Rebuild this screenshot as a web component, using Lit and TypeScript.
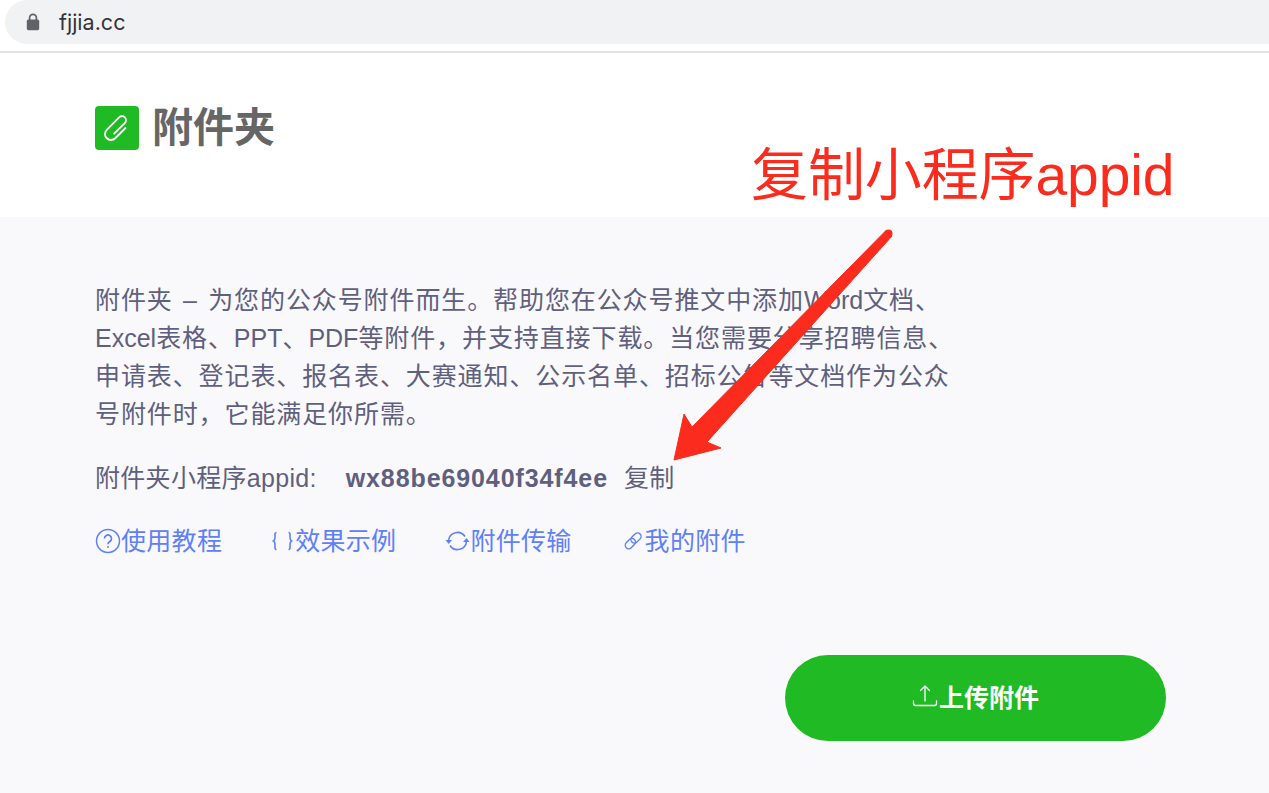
import { LitElement, html, css } from "lit";
import { customElement } from "lit/decorators.js";

@customElement("app-root")
export class AppRoot extends LitElement {
  static styles = css`
    :host { display: block; position: relative; width: 1269px; height: 793px; overflow: hidden; background: #fff;
      font-family: "Liberation Sans", "Noto Sans CJK SC", sans-serif; }
    .page { display: flex; flex-direction: column; height: 793px; }
    .chrome { flex: none; border-bottom: 2px solid #e2e2e4; box-sizing: border-box; height: 53px; padding-left: 5px; }
    .pill { height: 44px; margin-right: -40px; background: #f1f2f4; border-radius: 22px 0 0 22px; display: flex; align-items: center; padding-left: 21px; gap: 19px; color: #33353a; font-family: Inter, sans-serif; font-size: 21.5px; }
    .pill svg { display: block; }
    .head { height: 164px; flex: none; padding: 53px 0 0 95px; box-sizing: border-box; display: flex; align-items: flex-start; gap: 13px; }
    .logo { width: 44px; height: 44px; border-radius: 4px; background: #20ba25; }
    .logo svg { display: block; }
    .title { font-size: 41px; line-height: 46px; font-weight: 700; color: #666; margin-top: -1px; }
    .main { flex: 1; background: #f9f9fc; padding: 64px 0 0 95px; position: relative; color: #5f607e; }
    .desc { margin: 0; width: 868px; font-size: 25px; letter-spacing: 0.9px; word-spacing: 2.5px; line-height: 38px; }
    .lat { letter-spacing: 0; }
    .appid { margin-top: 26px; display: flex; font-size: 25px; line-height: 38px; letter-spacing: 0.3px; }
    .appid b { font-weight: 700; letter-spacing: 0.9px; margin-left: 29px; margin-right: 16px; }
    .links { margin: 25px 0 0 0; display: flex; gap: 49px; color: #6080f8; font-size: 25px; letter-spacing: 0.3px; line-height: 38px; }
    .link { display: flex; align-items: center; }
    .link.last { margin-left: 2px; }
    .link svg { display: block; flex: none; }
    .btn-row { margin-top: 95px; display: flex; justify-content: flex-end; padding-right: 103px; }
    .btn { width: 381px; height: 86px; border-radius: 43px; background: #20ba25; color: #fff; display: flex; align-items: center; justify-content: center; gap: 1px; font-size: 25px; font-weight: 700; padding-bottom: 4px; box-sizing: border-box; }
    .note { position: absolute; left: 751px; top: 134px; font-size: 57px; line-height: 82px; color: #fb2c1e; white-space: nowrap; letter-spacing: -0.1px; }
    .arrow { position: absolute; left: 0; top: 0; pointer-events: none; }
  `;

  render() {
    return html`
      <div class="page">
        <div class="chrome">
          <div class="pill">
            <svg width="14" height="18" viewBox="0 0 14 18"><path d="M3.6 7V4.8a3.4 3.4 0 0 1 6.8 0V7" fill="none" stroke="#5f6368" stroke-width="1.7"/><rect x="0.8" y="6.6" width="12.4" height="10.6" rx="1.6" fill="#5f6368"/></svg>
            <span>fjjia.cc</span>
          </div>
        </div>
        <div class="head">
          <div class="logo">
            <svg width="44" height="44" viewBox="0 0 44 44" fill="none" stroke="#fff" stroke-width="1.800" stroke-linecap="round"><g transform="rotate(-45 22 22)"><path d="M28 28H13.500a6 6 0 0 1 0-12H31a4 4 0 0 1 0 8H16"/></g></svg>
          </div>
          <div class="title">附件夹</div>
        </div>
        <div class="main">
          <p class="desc">附件夹 – 为您的公众号附件而生。帮助您在公众号推文中添加<span class="lat">Word</span>文档、<span class="lat">Excel</span>表格、<span class="lat">PPT</span>、<span class="lat">PDF</span>等附件，并支持直接下载。当您需要分享招聘信息、申请表、登记表、报名表、大赛通知、公示名单、招标公告等文档作为公众号附件时，它能满足你所需。</p>
          <div class="appid"><span>附件夹小程序appid:</span><b>wx88be69040f34f4ee</b><span>复制</span></div>
          <div class="links">
            <div class="link">
              <svg width="26" height="26" viewBox="0 0 26 26" fill="none" stroke="#6080f8" stroke-width="1.500"><circle cx="13" cy="13" r="11.500"/><path d="M9.500 10.500a3.500 3.500 0 1 1 5.300 3c-1.300.8-1.800 1.400-1.800 2.800" stroke-width="1.700"/><circle cx="13" cy="19" r="1" fill="#6080f8" stroke="none"/></svg>
              <span>使用教程</span>
            </div>
            <div class="link">
              <svg width="24" height="26" viewBox="0 0 24 26" fill="none" stroke="#6080f8" stroke-width="1.600"><path d="M5.500 4.500c-2 0-1.500 2.500-1.500 4.500 0 2-.5 3.500-1.500 4 1 .5 1.500 2 1.500 4s-.5 4.500 1.500 4.500"/><path d="M17.500 4.500c2 0 1.500 2.500 1.500 4.500 0 2 .5 3.500 1.500 4-1 .5-1.500 2-1.500 4s.5 4.500-1.500 4.500"/></svg>
              <span>效果示例</span>
            </div>
            <div class="link">
              <svg width="25" height="26" viewBox="0 0 25 26" fill="none" stroke="#6080f8" stroke-width="1.600"><path d="M3.500 12.500a9 9 0 0 1 16.500-4"/><path d="M21.500 13.500a9 9 0 0 1-16.500 4"/><path d="M0.500 12 7 12 3.700 16z" fill="#6080f8" stroke="none"/><path d="M18 14 24.500 14 21.500 10z" fill="#6080f8" stroke="none"/></svg>
              <span>附件传输</span>
            </div>
            <div class="link last">
              <svg width="22" height="26" viewBox="0 0 22 26" fill="none" stroke="#6080f8" stroke-width="1.400" stroke-linecap="round"><g transform="rotate(-45 10 13)"><rect x="0.500" y="9.500" width="11.500" height="7" rx="3.500"/><rect x="8.500" y="9.500" width="11.500" height="7" rx="3.500"/></g></svg>
              <span>我的附件</span>
            </div>
          </div>
          <div class="btn-row">
            <div class="btn">
              <svg width="26" height="26" viewBox="0 0 26 26" fill="none" stroke="#fff" stroke-width="1.300" stroke-linecap="round" stroke-linejoin="round"><path d="M13 3v15M8.500 7.500 13 3l4.500 4.500"/><path d="M1.500 18v2.500a2 2 0 0 0 2 2h19a2 2 0 0 0 2-2V18"/></svg>
              <span>上传附件</span>
            </div>
          </div>
        </div>
      </div>
      <div class="note">复制小程序appid</div>
      <svg class="arrow" width="1269" height="793" viewBox="0 0 1269 793">
        <path d="M886 230.500 692 427 684 414 674 460 721 448 707 442 892 236Z" fill="#fb2c1e" stroke="#fb2c1e" stroke-width="1" stroke-linejoin="round"/>
        <circle cx="888.500" cy="233.500" r="4" fill="#fb2c1e"/>
      </svg>
    `;
  }
}
